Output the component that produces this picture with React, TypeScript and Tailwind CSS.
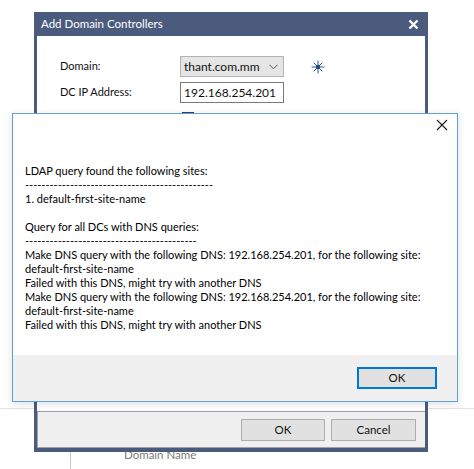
import React from "react";

const font = { fontFamily: 'Lato, "Noto Sans", Arial, sans-serif' };

function Spark() {
  return (
    <svg width="14" height="14" viewBox="0 0 14 14">
      <g stroke="#2d5aa0" strokeWidth="1" strokeLinecap="round">
        <line x1="7" y1="1" x2="7" y2="13" />
        <line x1="1" y1="7" x2="13" y2="7" />
        <line x1="3" y1="3" x2="11" y2="11" />
        <line x1="11" y1="3" x2="3" y2="11" />
      </g>
      <circle cx="7" cy="7" r="2.2" fill="#1f4a8c" />
    </svg>
  );
}

function Chevron() {
  return (
    <svg width="9" height="6" viewBox="0 0 9 6">
      <path d="M0.5 0.8 L4.5 4.8 L8.5 0.8" fill="none" stroke="#555" strokeWidth="1" />
    </svg>
  );
}

const log = [
  "LDAP query found the following sites:",
  "----------------------------------------------",
  "1. default-first-site-name",
  "",
  "Query for all DCs with DNS queries:",
  "------------------------------------------",
  "Make DNS query with the following DNS: 192.168.254.201, for the following site:",
  "default-first-site-name",
  "Failed with this DNS, might try with another DNS",
  "Make DNS query with the following DNS: 192.168.254.201, for the following site:",
  "default-first-site-name",
  "Failed with this DNS, might try with another DNS",
];

function AddDomainDialog() {
  return (
    <div className="absolute left-[34px] top-[12px] w-[394px] h-[440px] bg-[#4b5b7e] flex flex-col px-[3px] pb-[4px]">
      {/* title bar */}
      <div className="h-[24px] flex items-center justify-between pl-[4px] pr-[6px]">
        <span className="text-[11.5px] text-white">Add Domain Controllers</span>
        <svg width="11" height="11" viewBox="0 0 11 11">
          <path d="M1.5 1.5 L9.5 9.5 M9.5 1.5 L1.5 9.5" stroke="#fff" strokeWidth="2.4" />
        </svg>
      </div>
      <div className="flex-1 bg-white relative pt-[20px] pl-[23px]">
        <div className="flex items-center h-[21px]">
          <span className="w-[120px] text-[11px] text-[#111]">Domain:</span>
          <div className="w-[104px] h-[21px] bg-[#e5e5e5] border border-[#b4b4b4] flex items-center justify-between pl-[3px] pr-[5px]">
            <span className="text-[12px] text-[#111]">thant.com.mm</span>
            <Chevron />
          </div>
          <div className="ml-[27px] flex items-center">
            <Spark />
          </div>
        </div>
        <div className="flex items-center h-[21px] mt-[5px]">
          <span className="w-[120px] text-[11px] text-[#111]">DC IP Address:</span>
          <div className="w-[104px] h-[21px] bg-white border border-[#7a7a7a] flex items-center pl-[3px]">
            <span className="text-[12px] text-[#111]">192.168.254.201</span>
          </div>
        </div>
        <div className="ml-[122px] mt-[9px] w-[12px] h-[12px] border-2 border-[#2a4066]" />
      </div>
      {/* footer */}
      <div className="h-[37px] bg-[#f0f0f0] border-t border-l border-b border-[#a0a0a0] flex items-center justify-end gap-[6px] pr-[9px]">
        <div className="w-[84px] h-[22px] border border-[#adadad] bg-[#e1e1e1] flex items-center justify-center text-[11.5px] text-[#111]">
          OK
        </div>
        <div className="w-[85px] h-[22px] border border-[#adadad] bg-[#e1e1e1] flex items-center justify-center text-[11.5px] text-[#111]">
          Cancel
        </div>
      </div>
    </div>
  );
}

function MessageBox() {
  return (
    <div className="absolute left-[12px] top-[113px] w-[446px] h-[289px] border border-[#62a0dc] bg-white flex flex-col shadow-[0_2px_8px_rgba(0,0,0,0.12)]">
      <div className="h-[50px] flex justify-end pt-[5px] pr-[9px]">
        <svg width="12" height="12" viewBox="0 0 12 12">
          <path d="M1 1 L11 11 M11 1 L1 11" stroke="#1a1a1a" strokeWidth="1.1" />
        </svg>
      </div>
      <div className="flex-1 pl-[12px]">
        {log.map((line, i) => (
          <div key={i} className="h-[14px] leading-[14px] text-[11px] text-black whitespace-pre">
            {line}
          </div>
        ))}
      </div>
      <div className="h-[46px] bg-[#f0f0f0] flex items-center justify-end pr-[20px]">
        <div className="w-[80px] h-[22px] border-2 border-[#0078d7] bg-[#e1e1e1] flex items-center justify-center text-[11.5px] text-[#111]">
          OK
        </div>
      </div>
    </div>
  );
}

export default function App() {
  return (
    <div className="relative w-[474px] h-[469px] bg-white overflow-hidden" style={font}>
      {/* page behind the dialogs */}
      <div className="absolute left-0 right-0 top-[408px] h-px bg-[#e3e3e3]" />
      <div className="absolute left-[70px] top-[452px] bottom-0 w-px bg-[#c8c8c8]" />
      <div className="absolute left-[124px] top-[446px] text-[11.5px] text-[#7a7a7a]">Domain Name</div>

      <AddDomainDialog />
      <MessageBox />
    </div>
  );
}
